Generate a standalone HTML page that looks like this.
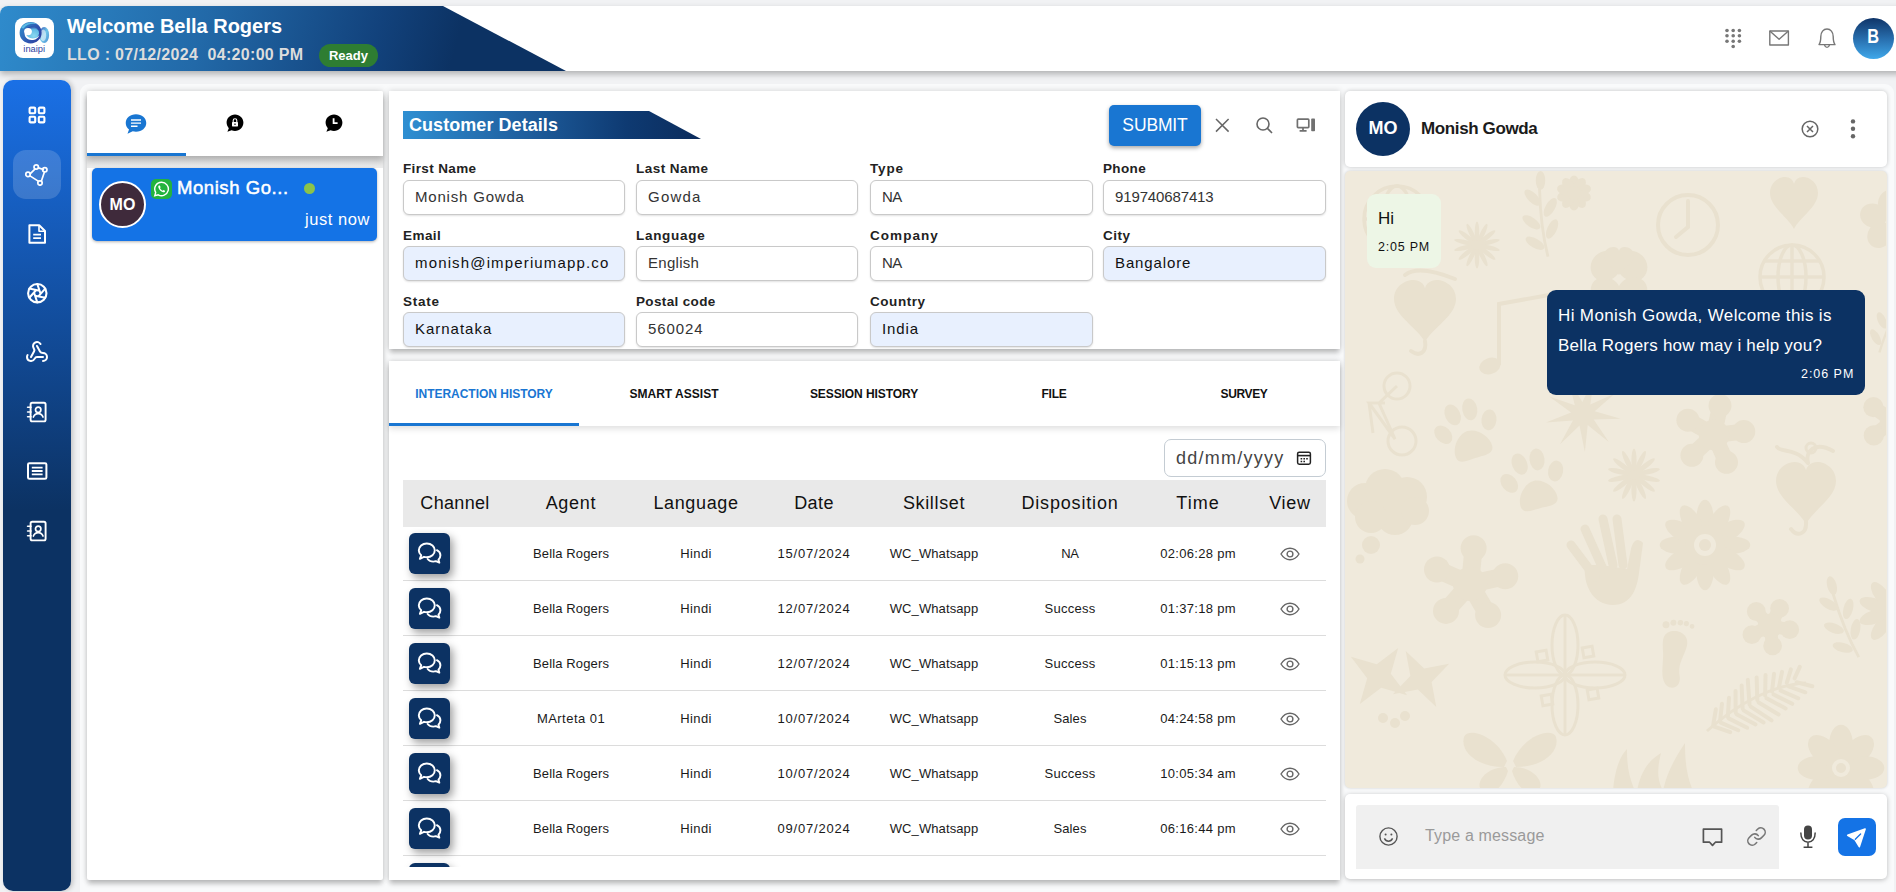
<!DOCTYPE html>
<html><head><meta charset="utf-8">
<style>
*{box-sizing:border-box;margin:0;padding:0}
html,body{width:1896px;height:892px;overflow:hidden;background:#f1f2f4;font-family:"Liberation Sans",sans-serif;color:#222}
.abs{position:absolute}
#hdr{position:absolute;left:0;top:6px;width:1930px;height:65px;background:#fff;box-shadow:0 3px 6px rgba(0,0,0,.28);border-radius:8px 0 0 0}
#hdrblue{position:absolute;left:0;top:0;width:566px;height:65px;background:linear-gradient(105deg,#2f8bcc 0%,#2269a8 36%,#12427c 66%,#0c3263 80%,#0c3263 100%);clip-path:polygon(0 0,443px 0,566px 65px,0 65px);border-radius:8px 0 0 0}
#logo{position:absolute;left:15px;top:12px;width:38.5px;height:40px;background:#fff;border-radius:8px}
.t1{position:absolute;left:67px;top:8px;font-weight:700;font-size:20px;color:#fff;white-space:nowrap;line-height:24px}
.t2{position:absolute;left:67px;top:39px;font-weight:700;font-size:16px;color:#ddd;white-space:pre;line-height:20px}
.ready{position:absolute;left:319px;top:38px;width:59px;height:23px;border-radius:12px;background:#2e7d32;color:#fff;font-weight:700;font-size:13px;text-align:center;line-height:23px}
#side{position:absolute;left:3px;top:80px;width:68px;height:811px;border-radius:10px;background:linear-gradient(180deg,#1a70e6 0%,#0c3263 53%,#0c3263 100%);box-shadow:2px 0 5px rgba(0,0,0,.2)}
.panel{position:absolute;background:#fff;box-shadow:0 5px 5px -1px rgba(0,0,0,.2),0 0 6px rgba(0,0,0,.17)}

.tabbar{position:absolute;left:0;top:0;width:296px;height:65px;background:#fff;box-shadow:0 4px 6px rgba(0,0,0,.2);border-radius:2px 2px 0 0}
.citem{position:absolute;left:5px;top:77px;width:285px;height:73px;border-radius:5px;background:#1473e6;box-shadow:0 1px 3px rgba(0,0,0,.3)}
.lbl{position:absolute;font-weight:700;font-size:13.5px;color:#222;line-height:16px;white-space:nowrap}
.inp{position:absolute;width:222px;height:35px;border:1px solid #c9c9c9;border-radius:6px;background:#fff;font-size:15px;color:#333;line-height:31px;padding-left:11px;white-space:nowrap;overflow:hidden;box-shadow:0 1px 2px rgba(0,0,0,.12)}
.inp.af{background:#e8f0fe;color:#111}

.tab{position:absolute;top:0;width:190px;height:64px;text-align:center;font-weight:700;font-size:12px;line-height:66px;color:#111;white-space:nowrap}
.th{position:absolute;top:0;height:47px;line-height:47px;font-size:18px;color:#111;text-align:center;white-space:nowrap;transform:translateX(-50%)}
.row{position:absolute;left:14px;width:923px;height:55px;border-bottom:1px solid #dcdcdc}
.td{position:absolute;top:0;height:56px;line-height:56px;font-size:13px;color:#1a1a1a;white-space:nowrap;transform:translateX(-50%)}
.chi{position:absolute;left:6px;top:7px;width:41px;height:41px;border-radius:6px;background:#0c3263;box-shadow:3px 4px 8px rgba(0,0,0,.38)}
</style></head><body>
<div id="hdr"><div id="hdrblue"></div>
<div id="logo"></div>
<div class="t1" style="--w:215;letter-spacing:-0.01px">Welcome Bella Rogers</div>
<div class="t2" style="--w:236;letter-spacing:0.30px">LLO : 07/12/2024  04:20:00 PM</div>
<div class="ready">Ready</div>
<svg class="abs" style="left:15px;top:12px" width="39" height="40" viewBox="0 0 39 40">
<defs><linearGradient id="lg1" x1="0" y1=".3" x2="1" y2=".9"><stop offset="0" stop-color="#2f86c9"/><stop offset=".55" stop-color="#2f55b0"/><stop offset="1" stop-color="#2a3c9c"/></linearGradient>
<linearGradient id="lg2" x1="0" y1="0" x2="1" y2="1"><stop offset="0" stop-color="#3a55b4"/><stop offset=".5" stop-color="#6cc6ea"/><stop offset="1" stop-color="#4d8fd2"/></linearGradient>
<radialGradient id="lg3" cx=".65" cy=".7" r=".7"><stop offset="0" stop-color="#8ad8f0"/><stop offset=".7" stop-color="#5fb9e4"/><stop offset="1" stop-color="#2d4aa6"/></radialGradient></defs>
<ellipse cx="29.2" cy="17" rx="4.9" ry="8" fill="url(#lg2)"/>
<ellipse cx="28.2" cy="17.4" rx="3" ry="5.8" fill="#fff" opacity=".55"/>
<ellipse cx="15.6" cy="14.7" rx="11" ry="10.8" fill="url(#lg1)"/>
<path d="M6.2 10 C9 4.6 17 2.6 22.4 6.2 C18 5 12 5.6 8.6 10.4 Z" fill="#62c4ea" opacity=".85"/>
<ellipse cx="16.6" cy="15.2" rx="7.4" ry="6.6" fill="url(#lg3)"/>
<path d="M9.6 15.6 C9.6 20 13.6 22.6 18 22 C21.4 21.5 23.6 19.6 24.4 17.2 C22.6 19.6 20.4 20.4 17.6 20.4 C14 20.4 11.4 18.4 10.6 15 Z" fill="#fff"/>
<ellipse cx="13" cy="13.6" rx="3.9" ry="3.7" fill="#fff"/>
<text x="19.2" y="34.3" font-family="Liberation Sans" font-size="9.3" fill="#2c3fa0" text-anchor="middle">inaipi</text>
</svg>
<svg class="abs" style="left:1722px;top:20px" width="24" height="24" viewBox="0 0 24 24" fill="#777">
<circle cx="5" cy="4.5" r="1.8"/><circle cx="11.2" cy="4.5" r="1.8"/><circle cx="17.4" cy="4.5" r="1.8"/>
<circle cx="5" cy="9.8" r="1.8"/><circle cx="11.2" cy="9.8" r="1.8"/><circle cx="17.4" cy="9.8" r="1.8"/>
<circle cx="5" cy="15.2" r="1.8"/><circle cx="11.2" cy="15.2" r="1.8"/><circle cx="17.4" cy="15.2" r="1.8"/>
<circle cx="11.2" cy="20.5" r="1.8"/></svg>
<svg class="abs" style="left:1767px;top:22px" width="24" height="20" viewBox="0 0 24 20" fill="none" stroke="#777" stroke-width="1.4" stroke-linejoin="round">
<rect x="2.8" y="3" width="18.6" height="14"/><path d="M2.8 3 L12.1 11.3 L21.4 3"/></svg>
<svg class="abs" style="left:1815px;top:20px" width="24" height="26" viewBox="0 0 24 26" fill="none" stroke="#777" stroke-width="1.4" stroke-linejoin="round" stroke-linecap="round">
<path d="M4 18.6 C5.6 16.6 5.8 14.6 5.8 10.6 C5.8 6.2 8.4 3 12 3 C15.6 3 18.2 6.2 18.2 10.6 C18.2 14.6 18.4 16.6 20 18.6 Z"/><path d="M9.6 19.2 C10 20.8 11 21.4 12 21.4 C13 21.4 14 20.8 14.4 19.2"/></svg>
<div class="abs" style="left:1853px;top:12px;width:41px;height:41px;border-radius:50%;background:linear-gradient(180deg,#0f3468 0%,#2a73b3 55%,#40a8ea 100%);color:#fff;font-weight:700;font-size:19.5px;text-align:center;line-height:37px"><span style="display:inline-block;transform:scaleX(.84)">B</span></div>

</div>
<div class="abs" style="left:80px;top:84px;width:1814px;height:830px;border-radius:9px;background:#f9fafb"></div>
<div id="side">
<div class="abs" style="left:10px;top:70px;width:48px;height:49px;border-radius:13px;background:rgba(255,255,255,.16)"></div>
<!-- grid -->
<svg class="abs" style="left:22px;top:23px" width="24" height="24" viewBox="0 0 24 24" fill="none" stroke="#fff" stroke-width="2.1" stroke-linejoin="round">
<rect x="4.6" y="4.6" width="5.6" height="5.6" rx="1"/><rect x="13.8" y="4.6" width="5.6" height="5.6" rx="1"/><rect x="4.6" y="13.8" width="5.6" height="5.6" rx="1"/><rect x="13.8" y="13.8" width="5.6" height="5.6" rx="1"/></svg>
<!-- polygon -->
<svg class="abs" style="left:21.3px;top:82.3px" width="24" height="24" viewBox="0 0 24 24" fill="none" stroke="#fff" stroke-width="1.7">
<path d="M5.6 12.4 L11.4 6.6 M13.8 5.6 L20 7.8 M20.6 9.6 L17.4 19 M15 19.6 L5.6 13.6"/>
<circle cx="12.2" cy="5" r="2.2"/><circle cx="20.8" cy="7.8" r="2.2"/><circle cx="4" cy="12.4" r="2.2"/><circle cx="16" cy="21" r="2.2"/></svg>
<!-- doc -->
<svg class="abs" style="left:22px;top:142px" width="24" height="24" viewBox="0 0 24 24" fill="none" stroke="#fff" stroke-width="2" stroke-linejoin="round">
<path d="M4.4 3.2 H14.2 L20 9 V20.8 H4.4 Z"/><path d="M14 3.4 V9.2 H19.8" stroke-width="1.6"/><path d="M8.2 12.6 H16 M8.2 16.2 H16" stroke-width="1.8"/></svg>
<!-- aperture -->
<svg class="abs" style="left:22px;top:201px" width="24" height="24" viewBox="0 0 24 24" fill="none" stroke="#fff" stroke-width="2.1" stroke-linecap="round">
<circle cx="12.3" cy="12.15" r="9.2"/>
<path d="M20.27 16.75 L10.08 14.65 M12.30 21.35 L9.02 11.48 M4.33 16.75 L11.24 8.97 M4.33 7.55 L14.52 9.65 M12.30 2.95 L15.58 12.82 M20.27 7.55 L13.36 15.33" stroke-width="2"/></svg>
<!-- webhook -->
<svg class="abs" style="left:22px;top:260px" width="24" height="24" viewBox="0 0 24 24" fill="none" stroke="#fff" stroke-width="2" stroke-linecap="round" stroke-linejoin="round">
<path d="M18 16.98h-5.99c-1.1 0-1.95.94-2.48 1.9A4 4 0 0 1 2 17c.01-.7.2-1.4.57-2"/><path d="m6 17 3.13-5.78c.53-.97.1-2.18-.5-3.1a4 4 0 1 1 6.89-4.06"/><path d="m12 6 3.13 5.73C15.66 12.7 16.9 13 18 13a4 4 0 0 1 0 8"/></svg>
<!-- contact book -->
<svg class="abs" style="left:22px;top:320px" width="24" height="24" viewBox="0 0 24 24" fill="none" stroke="#fff" stroke-width="1.9" stroke-linejoin="round" stroke-linecap="round">
<rect x="5.6" y="2.8" width="15" height="18.6" rx="1.6"/><path d="M2.6 7.2 H6 M2.6 12 H6 M2.6 16.8 H6" stroke-width="1.6"/><circle cx="13.2" cy="9.8" r="2.7" stroke-width="1.7"/><path d="M8.4 17 C9.4 14.4 11.4 13.6 13.2 13.6 C15 13.6 17 14.4 18 17" stroke-width="1.7"/></svg>
<!-- list -->
<svg class="abs" style="left:22px;top:379px" width="24" height="24" viewBox="0 0 24 24" fill="none" stroke="#fff" stroke-width="2" stroke-linejoin="round">
<rect x="3" y="4.2" width="18.4" height="15.6" rx="1.4"/><path d="M6.8 8.6 H17.6 M6.8 12 H17.6 M6.8 15.4 H17.6" stroke-width="1.8"/></svg>
<!-- contact book 2 -->
<svg class="abs" style="left:22px;top:439px" width="24" height="24" viewBox="0 0 24 24" fill="none" stroke="#fff" stroke-width="1.9" stroke-linejoin="round" stroke-linecap="round">
<rect x="5.6" y="2.8" width="15" height="18.6" rx="1.6"/><path d="M2.6 7.2 H6 M2.6 12 H6 M2.6 16.8 H6" stroke-width="1.6"/><circle cx="13.2" cy="9.8" r="2.7" stroke-width="1.7"/><path d="M8.4 17 C9.4 14.4 11.4 13.6 13.2 13.6 C15 13.6 17 14.4 18 17" stroke-width="1.7"/></svg>
</div>
<div class="panel" id="left" style="left:87px;top:91px;width:296px;height:789px;border-radius:2px">
<div class="abs" style="left:0;top:65px;width:296px;height:12px;background:linear-gradient(180deg,#dadada,#ececec)"></div><div class="tabbar"></div>
<div class="abs" style="left:0;top:62px;width:99px;height:3px;background:#1976d2"></div>
<!-- tab icons -->
<svg class="abs" style="left:37px;top:20.5px" width="24" height="24" viewBox="0 0 22 22"><path d="M11 2 C5.6 2 1.6 5.6 1.6 10 C1.6 12.4 2.8 14.6 4.6 16 L3.2 20 L8 17.6 C9 17.9 10 18 11 18 C16.4 18 20.4 14.4 20.4 10 C20.4 5.6 16.4 2 11 2 Z" fill="#1976d2"/><path d="M6.4 7.4 H15.6 M6.4 10.2 H15.6 M6.4 13 H12.4" stroke="#fff" stroke-width="1.3"/></svg>
<svg class="abs" style="left:138px;top:22px" width="20" height="20" viewBox="0 0 20 20"><path d="M10 1.4 C5.2 1.4 1.6 5 1.6 9.6 C1.6 11.8 2.4 13.6 3.8 15.2 L2.4 18.8 L6.6 17.2 C7.6 17.7 8.8 17.9 10 17.9 C14.8 17.9 18.4 14.2 18.4 9.6 C18.4 5 14.8 1.4 10 1.4 Z" fill="#000"/><rect x="7" y="9" width="6" height="4.4" rx=".6" fill="#fff"/><path d="M8.2 9 V7.6 C8.2 6.4 9 5.8 10 5.8 C11 5.8 11.8 6.4 11.8 7.6 V9" fill="none" stroke="#fff" stroke-width="1.1"/><rect x="9.3" y="10.6" width="1.4" height="1.2" fill="#000"/></svg>
<svg class="abs" style="left:237px;top:22px" width="20" height="20" viewBox="0 0 20 20"><path d="M10 1.4 C5.2 1.4 1.6 5 1.6 9.6 C1.6 11.8 2.4 13.6 3.8 15.2 L2.4 18.8 L6.6 17.2 C7.6 17.7 8.8 17.9 10 17.9 C14.8 17.9 18.4 14.2 18.4 9.6 C18.4 5 14.8 1.4 10 1.4 Z" fill="#000"/><path d="M9.6 5.2 V10.2 H13.6" fill="none" stroke="#fff" stroke-width="1.8"/></svg>
<div class="citem">
<div class="abs" style="left:7px;top:13px;width:47px;height:47px;border-radius:50%;background:#3f2a3b;border:2px solid #fff;color:#fff;font-weight:700;font-size:16px;text-align:center;line-height:44px">MO</div>
<div class="abs" style="left:59px;top:11px;width:21px;height:20px;border-radius:5px;background:#23b33e"></div>
<svg class="abs" style="left:61px;top:12px" width="17" height="18" viewBox="0 0 24 24"><path d="M12 2.5 A9.5 9.5 0 0 0 3.8 16.8 L2.5 21.5 L7.4 20.2 A9.5 9.5 0 1 0 12 2.5 Z" fill="none" stroke="#fff" stroke-width="2"/><path d="M8.4 7.2 C7.6 7.6 7.2 8.6 7.6 10 C8.4 13 11 15.8 14.2 16.6 C15.4 16.9 16.6 16.4 16.9 15.4 L17 14.6 L14.6 13.4 L13.6 14.4 C12 13.8 10.4 12.2 9.8 10.6 L10.8 9.6 L9.6 7.1 Z" fill="#fff"/></svg>
<div class="abs" style="--w:111;letter-spacing:0.56px;left:85px;top:8px;font-size:18.5px;line-height:24px;color:#fff;white-space:nowrap;-webkit-text-stroke:.5px #fff">Monish Go...</div>
<div class="abs" style="left:212px;top:15px;width:11px;height:11px;border-radius:50%;background:#8bc34a"></div>
<div class="abs" style="--w:64.5;letter-spacing:0.57px;right:7px;top:40px;font-size:16.5px;line-height:22px;color:#fff;white-space:nowrap">just now</div>
</div>
</div>
<div class="panel" id="ctop" style="left:389px;top:91px;width:951px;height:258px">
<div class="abs" style="left:14px;top:20px;width:298px;height:28px;background:linear-gradient(90deg,#2f8fd2 0%,#1f5f9f 40%,#0e3a72 75%,#0b2c5c 100%);clip-path:polygon(0 0,246px 0,298px 28px,0 28px)"></div>
<div class="abs" style="--w:149;letter-spacing:0.06px;left:20px;top:22px;font-weight:700;font-size:18px;line-height:24px;color:#fff;white-space:nowrap">Customer Details</div>
<div class="abs" style="--w:65.4;letter-spacing:-0.14px;left:720px;top:14px;width:92px;height:41px;border-radius:5px;background:#1976d2;box-shadow:0 2px 4px rgba(0,0,0,.35);color:#fff;font-size:17.5px;text-align:center;line-height:40px">SUBMIT</div>
<svg class="abs" style="left:823px;top:24px" width="20" height="20" viewBox="0 0 20 20" stroke="#666" stroke-width="1.5" fill="none"><path d="M4 4 L16.6 16.6 M16.6 4 L4 16.6"/></svg>
<svg class="abs" style="left:865px;top:24px" width="20" height="20" viewBox="0 0 20 20" stroke="#666" stroke-width="1.6" fill="none"><circle cx="9" cy="9" r="6"/><path d="M13.4 13.4 L18 18"/></svg>
<svg class="abs" style="left:906px;top:24px" width="22" height="20" viewBox="0 0 22 20" fill="none" stroke="#707070" stroke-width="1.7"><rect x="2.4" y="4.2" width="11.4" height="8.4" rx=".8"/><path d="M8 12.8 V15.6 M4.6 15.8 H11.6"/><rect x="16.2" y="3.6" width="3.8" height="12.6" rx=".8" fill="#707070" stroke="none"/></svg>
<div class="lbl" style="--w:73;letter-spacing:0.36px;left:14px;top:70px">First Name</div><div class="inp" style="left:14px;top:89px"><span style="--w:109;letter-spacing:0.81px">Monish Gowda</span></div><div class="lbl" style="--w:72;letter-spacing:0.46px;left:247px;top:70px">Last Name</div><div class="inp" style="left:247px;top:89px"><span style="--w:52.4;letter-spacing:1.22px">Gowda</span></div><div class="lbl" style="--w:33;letter-spacing:0.83px;left:481px;top:70px">Type</div><div class="inp" style="left:481px;width:223px;top:89px"><span style="--w:19.7;letter-spacing:-0.70px">NA</span></div><div class="lbl" style="--w:42.7;letter-spacing:0.36px;left:714px;top:70px">Phone</div><div class="inp" style="left:714px;width:223px;top:89px"><span style="--w:98.7;letter-spacing:-0.13px">919740687413</span></div><div class="lbl" style="--w:37.8;letter-spacing:0.44px;left:14px;top:137px">Email</div><div class="inp af" style="left:14px;top:155px"><span style="--w:193.2;letter-spacing:1.15px">monish@imperiumapp.co</span></div><div class="lbl" style="--w:68.7;letter-spacing:0.70px;left:247px;top:137px">Language</div><div class="inp" style="left:247px;top:155px"><span style="--w:50.9;letter-spacing:0.28px">English</span></div><div class="lbl" style="--w:67.8;letter-spacing:1.05px;left:481px;top:137px">Company</div><div class="inp" style="left:481px;width:223px;top:155px"><span style="--w:19.7;letter-spacing:-0.70px">NA</span></div><div class="lbl" style="--w:27;letter-spacing:0.49px;left:714px;top:137px">City</div><div class="inp af" style="left:714px;width:223px;top:155px"><span style="--w:75.4;letter-spacing:0.88px">Bangalore</span></div><div class="lbl" style="--w:36;letter-spacing:0.75px;left:14px;top:203px">State</div><div class="inp af" style="left:14px;top:221px"><span style="--w:76.2;letter-spacing:0.98px">Karnataka</span></div><div class="lbl" style="--w:79.3;letter-spacing:0.35px;left:247px;top:203px">Postal code</div><div class="inp" style="left:247px;top:221px"><span style="--w:54.5;letter-spacing:0.89px">560024</span></div><div class="lbl" style="--w:55.1;letter-spacing:0.56px;left:481px;top:203px">Country</div><div class="inp af" style="left:481px;width:223px;top:221px"><span style="--w:36;letter-spacing:0.87px">India</span></div>
</div>
<div class="panel" id="cbot" style="left:389px;top:361px;width:951px;height:519px">
<div class="abs" style="left:0;top:0;width:951px;height:65px;background:#fff;box-shadow:0 3px 6px rgba(0,0,0,.12)"></div>
<div class="tab" style="--w:137.7;letter-spacing:-0.02px;left:0px;color:#1976d2">INTERACTION HISTORY</div><div class="tab" style="--w:89;letter-spacing:0.01px;left:190px">SMART ASSIST</div><div class="tab" style="--w:108.2;letter-spacing:-0.08px;left:380px">SESSION HISTORY</div><div class="tab" style="--w:25.1;letter-spacing:-0.30px;left:570px">FILE</div><div class="tab" style="--w:47.2;letter-spacing:-0.39px;left:760px">SURVEY</div>
<div class="abs" style="left:0;top:62px;width:190px;height:3px;background:#1976d2"></div>
<div class="abs" style="left:775px;top:78px;width:162px;height:38px;border:1px solid #c4ccd3;border-radius:7px;background:#fff"></div>
<div class="abs" style="--w:107.2;letter-spacing:1.24px;left:787px;top:85px;font-size:18px;line-height:24px;color:#444;white-space:nowrap;">dd/mm/yyyy</div>
<svg class="abs" style="left:907px;top:89px" width="16" height="16" viewBox="0 0 16 16" fill="none" stroke="#222" stroke-width="1.5"><rect x="1.6" y="2.2" width="12.8" height="12" rx="1.6"/><path d="M1.6 5.6 H14.4" stroke-width="1.6"/><path d="M4.6 8.8 H6.2 M7.4 8.8 H9 M10.2 8.8 H11.8 M4.6 11.4 H6.2 M7.4 11.4 H9" stroke-width="1.5"/></svg>
<div class="abs" style="left:0;top:0;width:951px;height:506px;overflow:hidden">
<div class="abs" style="left:14px;top:119px;width:923px;height:47px;background:#e9e9e9"><div class="th" style="--w:69;letter-spacing:0.32px;left:52px">Channel</div><div class="th" style="--w:50;letter-spacing:0.74px;left:168px">Agent</div><div class="th" style="--w:84.4;letter-spacing:0.62px;left:293px">Language</div><div class="th" style="--w:39.3;letter-spacing:0.42px;left:411px">Date</div><div class="th" style="--w:61.5;letter-spacing:0.64px;left:531px">Skillset</div><div class="th" style="--w:96.3;letter-spacing:0.83px;left:667px">Disposition</div><div class="th" style="--w:42.4;letter-spacing:1.02px;left:795px">Time</div><div class="th" style="--w:40.9;letter-spacing:0.73px;left:887px">View</div></div>
<div class="row" style="top:165px"><div class="chi"><svg class="abs" style="left:7px;top:7px" width="27" height="27" viewBox="0 0 25 25" fill="none" stroke="#fff" stroke-width="1.8" stroke-linejoin="round" stroke-linecap="round"><path d="M10 3.2 C5.8 3.2 2.6 6 2.6 9.6 C2.6 11.4 3.4 13 4.8 14.2 L3.6 17.4 L7.4 15.6 C8.2 15.9 9.1 16 10 16 C14.2 16 17.4 13.2 17.4 9.6 C17.4 6 14.2 3.2 10 3.2 Z"/><path d="M19.4 9.4 C21.4 10.4 22.6 12.2 22.6 14.2 C22.6 15.8 21.9 17.2 20.8 18.2 L21.6 21 L18.4 19.6 C17.6 19.9 16.8 20 16 20 C13.8 20 11.9 19.1 10.8 17.6"/></svg></div><div class="td" style="--w:76;letter-spacing:0.14px;left:168px">Bella Rogers</div><div class="td" style="--w:31.2;letter-spacing:0.39px;left:293px">Hindi</div><div class="td" style="--w:72;letter-spacing:0.77px;left:411px">15/07/2024</div><div class="td" style="--w:88.4;letter-spacing:0.10px;left:531px">WC_Whatsapp</div><div class="td" style="--w:17.9;letter-spacing:-0.16px;left:667px">NA</div><div class="td" style="--w:75.4;letter-spacing:0.31px;left:795px">02:06:28 pm</div><svg class="abs" style="left:877px;top:21px" width="20" height="14" viewBox="0 0 20 14" fill="none" stroke="#666" stroke-width="1.4"><path d="M1 7 C3.4 3 6.4 1.2 10 1.2 C13.6 1.2 16.6 3 19 7 C16.6 11 13.6 12.8 10 12.8 C6.4 12.8 3.4 11 1 7 Z"/><circle cx="10" cy="7" r="2.9"/></svg></div><div class="row" style="top:220px"><div class="chi"><svg class="abs" style="left:7px;top:7px" width="27" height="27" viewBox="0 0 25 25" fill="none" stroke="#fff" stroke-width="1.8" stroke-linejoin="round" stroke-linecap="round"><path d="M10 3.2 C5.8 3.2 2.6 6 2.6 9.6 C2.6 11.4 3.4 13 4.8 14.2 L3.6 17.4 L7.4 15.6 C8.2 15.9 9.1 16 10 16 C14.2 16 17.4 13.2 17.4 9.6 C17.4 6 14.2 3.2 10 3.2 Z"/><path d="M19.4 9.4 C21.4 10.4 22.6 12.2 22.6 14.2 C22.6 15.8 21.9 17.2 20.8 18.2 L21.6 21 L18.4 19.6 C17.6 19.9 16.8 20 16 20 C13.8 20 11.9 19.1 10.8 17.6"/></svg></div><div class="td" style="--w:76;letter-spacing:0.14px;left:168px">Bella Rogers</div><div class="td" style="--w:31.2;letter-spacing:0.39px;left:293px">Hindi</div><div class="td" style="--w:72;letter-spacing:0.77px;left:411px">12/07/2024</div><div class="td" style="--w:88.4;letter-spacing:0.10px;left:531px">WC_Whatsapp</div><div class="td" style="--w:50.8;letter-spacing:0.28px;left:667px">Success</div><div class="td" style="--w:75.4;letter-spacing:0.31px;left:795px">01:37:18 pm</div><svg class="abs" style="left:877px;top:21px" width="20" height="14" viewBox="0 0 20 14" fill="none" stroke="#666" stroke-width="1.4"><path d="M1 7 C3.4 3 6.4 1.2 10 1.2 C13.6 1.2 16.6 3 19 7 C16.6 11 13.6 12.8 10 12.8 C6.4 12.8 3.4 11 1 7 Z"/><circle cx="10" cy="7" r="2.9"/></svg></div><div class="row" style="top:275px"><div class="chi"><svg class="abs" style="left:7px;top:7px" width="27" height="27" viewBox="0 0 25 25" fill="none" stroke="#fff" stroke-width="1.8" stroke-linejoin="round" stroke-linecap="round"><path d="M10 3.2 C5.8 3.2 2.6 6 2.6 9.6 C2.6 11.4 3.4 13 4.8 14.2 L3.6 17.4 L7.4 15.6 C8.2 15.9 9.1 16 10 16 C14.2 16 17.4 13.2 17.4 9.6 C17.4 6 14.2 3.2 10 3.2 Z"/><path d="M19.4 9.4 C21.4 10.4 22.6 12.2 22.6 14.2 C22.6 15.8 21.9 17.2 20.8 18.2 L21.6 21 L18.4 19.6 C17.6 19.9 16.8 20 16 20 C13.8 20 11.9 19.1 10.8 17.6"/></svg></div><div class="td" style="--w:76;letter-spacing:0.14px;left:168px">Bella Rogers</div><div class="td" style="--w:31.2;letter-spacing:0.39px;left:293px">Hindi</div><div class="td" style="--w:72;letter-spacing:0.77px;left:411px">12/07/2024</div><div class="td" style="--w:88.4;letter-spacing:0.10px;left:531px">WC_Whatsapp</div><div class="td" style="--w:50.8;letter-spacing:0.28px;left:667px">Success</div><div class="td" style="--w:75.4;letter-spacing:0.31px;left:795px">01:15:13 pm</div><svg class="abs" style="left:877px;top:21px" width="20" height="14" viewBox="0 0 20 14" fill="none" stroke="#666" stroke-width="1.4"><path d="M1 7 C3.4 3 6.4 1.2 10 1.2 C13.6 1.2 16.6 3 19 7 C16.6 11 13.6 12.8 10 12.8 C6.4 12.8 3.4 11 1 7 Z"/><circle cx="10" cy="7" r="2.9"/></svg></div><div class="row" style="top:330px"><div class="chi"><svg class="abs" style="left:7px;top:7px" width="27" height="27" viewBox="0 0 25 25" fill="none" stroke="#fff" stroke-width="1.8" stroke-linejoin="round" stroke-linecap="round"><path d="M10 3.2 C5.8 3.2 2.6 6 2.6 9.6 C2.6 11.4 3.4 13 4.8 14.2 L3.6 17.4 L7.4 15.6 C8.2 15.9 9.1 16 10 16 C14.2 16 17.4 13.2 17.4 9.6 C17.4 6 14.2 3.2 10 3.2 Z"/><path d="M19.4 9.4 C21.4 10.4 22.6 12.2 22.6 14.2 C22.6 15.8 21.9 17.2 20.8 18.2 L21.6 21 L18.4 19.6 C17.6 19.9 16.8 20 16 20 C13.8 20 11.9 19.1 10.8 17.6"/></svg></div><div class="td" style="--w:67.7;letter-spacing:0.46px;left:168px">MArteta 01</div><div class="td" style="--w:31.2;letter-spacing:0.39px;left:293px">Hindi</div><div class="td" style="--w:72;letter-spacing:0.77px;left:411px">10/07/2024</div><div class="td" style="--w:88.4;letter-spacing:0.10px;left:531px">WC_Whatsapp</div><div class="td" style="--w:32.9;letter-spacing:0.09px;left:667px">Sales</div><div class="td" style="--w:75.4;letter-spacing:0.31px;left:795px">04:24:58 pm</div><svg class="abs" style="left:877px;top:21px" width="20" height="14" viewBox="0 0 20 14" fill="none" stroke="#666" stroke-width="1.4"><path d="M1 7 C3.4 3 6.4 1.2 10 1.2 C13.6 1.2 16.6 3 19 7 C16.6 11 13.6 12.8 10 12.8 C6.4 12.8 3.4 11 1 7 Z"/><circle cx="10" cy="7" r="2.9"/></svg></div><div class="row" style="top:385px"><div class="chi"><svg class="abs" style="left:7px;top:7px" width="27" height="27" viewBox="0 0 25 25" fill="none" stroke="#fff" stroke-width="1.8" stroke-linejoin="round" stroke-linecap="round"><path d="M10 3.2 C5.8 3.2 2.6 6 2.6 9.6 C2.6 11.4 3.4 13 4.8 14.2 L3.6 17.4 L7.4 15.6 C8.2 15.9 9.1 16 10 16 C14.2 16 17.4 13.2 17.4 9.6 C17.4 6 14.2 3.2 10 3.2 Z"/><path d="M19.4 9.4 C21.4 10.4 22.6 12.2 22.6 14.2 C22.6 15.8 21.9 17.2 20.8 18.2 L21.6 21 L18.4 19.6 C17.6 19.9 16.8 20 16 20 C13.8 20 11.9 19.1 10.8 17.6"/></svg></div><div class="td" style="--w:76;letter-spacing:0.14px;left:168px">Bella Rogers</div><div class="td" style="--w:31.2;letter-spacing:0.39px;left:293px">Hindi</div><div class="td" style="--w:72;letter-spacing:0.77px;left:411px">10/07/2024</div><div class="td" style="--w:88.4;letter-spacing:0.10px;left:531px">WC_Whatsapp</div><div class="td" style="--w:50.8;letter-spacing:0.28px;left:667px">Success</div><div class="td" style="--w:75.4;letter-spacing:0.31px;left:795px">10:05:34 am</div><svg class="abs" style="left:877px;top:21px" width="20" height="14" viewBox="0 0 20 14" fill="none" stroke="#666" stroke-width="1.4"><path d="M1 7 C3.4 3 6.4 1.2 10 1.2 C13.6 1.2 16.6 3 19 7 C16.6 11 13.6 12.8 10 12.8 C6.4 12.8 3.4 11 1 7 Z"/><circle cx="10" cy="7" r="2.9"/></svg></div><div class="row" style="top:440px"><div class="chi"><svg class="abs" style="left:7px;top:7px" width="27" height="27" viewBox="0 0 25 25" fill="none" stroke="#fff" stroke-width="1.8" stroke-linejoin="round" stroke-linecap="round"><path d="M10 3.2 C5.8 3.2 2.6 6 2.6 9.6 C2.6 11.4 3.4 13 4.8 14.2 L3.6 17.4 L7.4 15.6 C8.2 15.9 9.1 16 10 16 C14.2 16 17.4 13.2 17.4 9.6 C17.4 6 14.2 3.2 10 3.2 Z"/><path d="M19.4 9.4 C21.4 10.4 22.6 12.2 22.6 14.2 C22.6 15.8 21.9 17.2 20.8 18.2 L21.6 21 L18.4 19.6 C17.6 19.9 16.8 20 16 20 C13.8 20 11.9 19.1 10.8 17.6"/></svg></div><div class="td" style="--w:76;letter-spacing:0.14px;left:168px">Bella Rogers</div><div class="td" style="--w:31.2;letter-spacing:0.39px;left:293px">Hindi</div><div class="td" style="--w:72;letter-spacing:0.77px;left:411px">09/07/2024</div><div class="td" style="--w:88.4;letter-spacing:0.10px;left:531px">WC_Whatsapp</div><div class="td" style="--w:32.9;letter-spacing:0.09px;left:667px">Sales</div><div class="td" style="--w:75.4;letter-spacing:0.31px;left:795px">06:16:44 pm</div><svg class="abs" style="left:877px;top:21px" width="20" height="14" viewBox="0 0 20 14" fill="none" stroke="#666" stroke-width="1.4"><path d="M1 7 C3.4 3 6.4 1.2 10 1.2 C13.6 1.2 16.6 3 19 7 C16.6 11 13.6 12.8 10 12.8 C6.4 12.8 3.4 11 1 7 Z"/><circle cx="10" cy="7" r="2.9"/></svg></div><div class="row" style="top:495px"><div class="chi"><svg class="abs" style="left:7px;top:7px" width="27" height="27" viewBox="0 0 25 25" fill="none" stroke="#fff" stroke-width="1.8" stroke-linejoin="round" stroke-linecap="round"><path d="M10 3.2 C5.8 3.2 2.6 6 2.6 9.6 C2.6 11.4 3.4 13 4.8 14.2 L3.6 17.4 L7.4 15.6 C8.2 15.9 9.1 16 10 16 C14.2 16 17.4 13.2 17.4 9.6 C17.4 6 14.2 3.2 10 3.2 Z"/><path d="M19.4 9.4 C21.4 10.4 22.6 12.2 22.6 14.2 C22.6 15.8 21.9 17.2 20.8 18.2 L21.6 21 L18.4 19.6 C17.6 19.9 16.8 20 16 20 C13.8 20 11.9 19.1 10.8 17.6"/></svg></div><div class="td" style="--w:76;letter-spacing:0.14px;left:168px">Bella Rogers</div><div class="td" style="--w:31.2;letter-spacing:0.39px;left:293px">Hindi</div><div class="td" style="--w:72;letter-spacing:0.77px;left:411px">09/07/2024</div><div class="td" style="--w:88.4;letter-spacing:0.10px;left:531px">WC_Whatsapp</div><div class="td" style="--w:32.9;letter-spacing:0.09px;left:667px">Sales</div><div class="td" style="--w:75.4;letter-spacing:0.31px;left:795px">05:10:02 pm</div><svg class="abs" style="left:877px;top:21px" width="20" height="14" viewBox="0 0 20 14" fill="none" stroke="#666" stroke-width="1.4"><path d="M1 7 C3.4 3 6.4 1.2 10 1.2 C13.6 1.2 16.6 3 19 7 C16.6 11 13.6 12.8 10 12.8 C6.4 12.8 3.4 11 1 7 Z"/><circle cx="10" cy="7" r="2.9"/></svg></div>
</div>
</div>
<div class="panel" id="rhead" style="left:1345px;top:91px;width:542px;height:76px;border-radius:5px;box-shadow:0 0 4px rgba(0,0,0,.22)">
<div class="abs" style="left:11px;top:11px;width:54px;height:54px;border-radius:50%;background:#0c3263;color:#fff;font-weight:700;font-size:18px;text-align:center;line-height:53px">MO</div>
<div class="abs" style="--w:116.8;letter-spacing:-0.37px;left:76px;top:26px;font-weight:700;font-size:17px;line-height:24px;color:#1b1b1b;white-space:nowrap">Monish Gowda</div>
<svg class="abs" style="left:455px;top:28px" width="20" height="20" viewBox="0 0 20 20" fill="none" stroke="#666" stroke-width="1.5"><circle cx="10" cy="10" r="7.8"/><path d="M7 7 L13 13 M13 7 L7 13"/></svg>
<svg class="abs" style="left:503px;top:25px" width="10" height="26" viewBox="0 0 10 26" fill="#666"><circle cx="5" cy="5.4" r="2.2"/><circle cx="5" cy="12.8" r="2.2"/><circle cx="5" cy="20.2" r="2.2"/></svg>
</div>
<div class="panel" id="rbody" style="left:1345px;top:171px;width:542px;height:617px;background:#f0eadc;border-radius:5px;overflow:hidden;box-shadow:0 0 3px rgba(0,0,0,.18)">
<svg class="abs" style="left:0;top:0" width="541" height="617" viewBox="0 0 541 617" fill="#e9e1cf"><g fill="none" stroke="#e9e1cf" stroke-width="3.5"><circle cx="52" cy="48" r="33"/><ellipse cx="52" cy="48" rx="15" ry="33"/><path d="M19 48 H85 M24 31 H80"/></g><g transform="translate(190 50) rotate(-20) scale(0.95)"><path d="M0 40 C2 20 6 0 16 -30" fill="none" stroke="#e9e1cf" stroke-width="3"/><ellipse cx="-8" cy="22" rx="5" ry="11" transform="rotate(-40 -8 22)"/><ellipse cx="14" cy="14" rx="5" ry="11" transform="rotate(45 14 14)"/><ellipse cx="-4" cy="0" rx="5" ry="11" transform="rotate(-35 -4 0)"/><ellipse cx="20" cy="-8" rx="5" ry="11" transform="rotate(50 20 -8)"/><ellipse cx="6" cy="-24" rx="5" ry="11" transform="rotate(-25 6 -24)"/><ellipse cx="20" cy="-38" rx="5" ry="10" transform="rotate(20 20 -38)"/></g><ellipse cx="229" cy="12.1" rx="5.1" ry="7.7" transform="rotate(0.0 229 22)"/><ellipse cx="229" cy="12.1" rx="5.1" ry="7.7" transform="rotate(36.0 229 22)"/><ellipse cx="229" cy="12.1" rx="5.1" ry="7.7" transform="rotate(72.0 229 22)"/><ellipse cx="229" cy="12.1" rx="5.1" ry="7.7" transform="rotate(108.0 229 22)"/><ellipse cx="229" cy="12.1" rx="5.1" ry="7.7" transform="rotate(144.0 229 22)"/><ellipse cx="229" cy="12.1" rx="5.1" ry="7.7" transform="rotate(180.0 229 22)"/><ellipse cx="229" cy="12.1" rx="5.1" ry="7.7" transform="rotate(216.0 229 22)"/><ellipse cx="229" cy="12.1" rx="5.1" ry="7.7" transform="rotate(252.0 229 22)"/><ellipse cx="229" cy="12.1" rx="5.1" ry="7.7" transform="rotate(288.0 229 22)"/><ellipse cx="229" cy="12.1" rx="5.1" ry="7.7" transform="rotate(324.0 229 22)"/><circle cx="229" cy="22" r="7"/><ellipse cx="132" cy="61.4" rx="2.3" ry="10.8" transform="rotate(0.0 132 74)"/><ellipse cx="132" cy="61.4" rx="2.3" ry="10.8" transform="rotate(25.7 132 74)"/><ellipse cx="132" cy="61.4" rx="2.3" ry="10.8" transform="rotate(51.4 132 74)"/><ellipse cx="132" cy="61.4" rx="2.3" ry="10.8" transform="rotate(77.1 132 74)"/><ellipse cx="132" cy="61.4" rx="2.3" ry="10.8" transform="rotate(102.9 132 74)"/><ellipse cx="132" cy="61.4" rx="2.3" ry="10.8" transform="rotate(128.6 132 74)"/><ellipse cx="132" cy="61.4" rx="2.3" ry="10.8" transform="rotate(154.3 132 74)"/><ellipse cx="132" cy="61.4" rx="2.3" ry="10.8" transform="rotate(180.0 132 74)"/><ellipse cx="132" cy="61.4" rx="2.3" ry="10.8" transform="rotate(205.7 132 74)"/><ellipse cx="132" cy="61.4" rx="2.3" ry="10.8" transform="rotate(231.4 132 74)"/><ellipse cx="132" cy="61.4" rx="2.3" ry="10.8" transform="rotate(257.1 132 74)"/><ellipse cx="132" cy="61.4" rx="2.3" ry="10.8" transform="rotate(282.9 132 74)"/><ellipse cx="132" cy="61.4" rx="2.3" ry="10.8" transform="rotate(308.6 132 74)"/><ellipse cx="132" cy="61.4" rx="2.3" ry="10.8" transform="rotate(334.3 132 74)"/><circle cx="132" cy="74" r="5"/><g fill="none" stroke="#e9e1cf" stroke-width="4"><circle cx="343" cy="54" r="30"/><path d="M343 30 V56 L331 66" stroke-linecap="round"/></g><path transform="translate(449 32) scale(1.0 1.0)" d="M0 26 C-6 14 -24 4 -24 -10 C-24 -20 -16 -26 -9 -26 C-4 -26 -1 -23 0 -19 C1 -23 4 -26 9 -26 C16 -26 24 -20 24 -10 C24 4 6 14 0 26 Z"/><g fill="none" stroke="#e9e1cf" stroke-width="3.5"><circle cx="447" cy="106" r="32"/><ellipse cx="447" cy="106" rx="14" ry="32"/><path d="M415 106 H479 M420 90 H474 M447 74 V138"/></g><ellipse cx="274" cy="89.4" rx="16.0" ry="14.4" transform="rotate(45.0 274 108)"/><ellipse cx="274" cy="89.4" rx="16.0" ry="14.4" transform="rotate(135.0 274 108)"/><ellipse cx="274" cy="89.4" rx="16.0" ry="14.4" transform="rotate(225.0 274 108)"/><ellipse cx="274" cy="89.4" rx="16.0" ry="14.4" transform="rotate(315.0 274 108)"/><path transform="translate(274 90) scale(0.625 0.5384615384615384)" d="M0 26 C-6 14 -24 4 -24 -10 C-24 -20 -16 -26 -9 -26 C-4 -26 -1 -23 0 -19 C1 -23 4 -26 9 -26 C16 -26 24 -20 24 -10 C24 4 6 14 0 26 Z"/><g fill="none" stroke="#e9e1cf" stroke-width="4"><path d="M154 194 V133 L204 124"/></g><ellipse cx="145" cy="195" rx="11" ry="8" transform="rotate(-20 145 195)"/><path transform="translate(80 140) scale(1.2916666666666667 1.1923076923076923)" d="M0 26 C-6 14 -24 4 -24 -10 C-24 -20 -16 -26 -9 -26 C-4 -26 -1 -23 0 -19 C1 -23 4 -26 9 -26 C16 -26 24 -20 24 -10 C24 4 6 14 0 26 Z"/><path d="M80 170 C82 182 74 186 66 180" fill="none" stroke="#e9e1cf" stroke-width="4" stroke-linecap="round"/><path d="M60 104 C70 96 90 100 110 108" fill="none" stroke="#e9e1cf" stroke-width="4" stroke-linecap="round"/><g fill="none" stroke="#e9e1cf" stroke-width="3"><circle cx="52" cy="215" r="13"/><circle cx="57" cy="270" r="14"/><path d="M52 215 L34 232 L50 268 L24 232 H40 M24 232 L28 262"/></g><g transform="translate(123 262) rotate(-18) scale(1.0)"><path d="M0 -2 C10 -2 20 10 19 20 C18 28 8 26 0 26 C-8 26 -18 28 -19 20 C-20 10 -10 -2 0 -2 Z"/><ellipse cx="-24" cy="-6" rx="7.5" ry="10.5" transform="rotate(-25 -24 -6)"/><ellipse cx="-9" cy="-22" rx="7.5" ry="11" transform="rotate(-8 -9 -22)"/><ellipse cx="9" cy="-22" rx="7.5" ry="11" transform="rotate(8 9 -22)"/><ellipse cx="24" cy="-6" rx="7.5" ry="10.5" transform="rotate(25 24 -6)"/></g><g transform="translate(189 312) rotate(-15) scale(1.0)"><path d="M0 -2 C10 -2 20 10 19 20 C18 28 8 26 0 26 C-8 26 -18 28 -19 20 C-20 10 -10 -2 0 -2 Z"/><ellipse cx="-24" cy="-6" rx="7.5" ry="10.5" transform="rotate(-25 -24 -6)"/><ellipse cx="-9" cy="-22" rx="7.5" ry="11" transform="rotate(-8 -9 -22)"/><ellipse cx="9" cy="-22" rx="7.5" ry="11" transform="rotate(8 9 -22)"/><ellipse cx="24" cy="-6" rx="7.5" ry="10.5" transform="rotate(25 24 -6)"/></g><polygon points="249.2,206.7 245.3,233.4 269.9,222.4 249.7,240.3 275.7,247.8 248.7,248.5 263.8,270.9 242.7,254.1 239.9,281.0 234.5,254.5 215.0,273.3 227.9,249.5 200.9,251.4 226.1,241.5 204.2,225.6 229.8,234.2 223.3,208.0 237.4,231.0"/><g stroke="#e9e1cf" stroke-width="16" stroke-linecap="round"><path d="M369 264 L375.0 234.6"/><path d="M369 264 L398.8 260.6"/><path d="M369 264 L381.5 291.3"/><path d="M369 264 L346.9 284.3"/><path d="M369 264 L342.9 249.2"/></g><circle cx="375.0" cy="234.6" r="11.5"/><circle cx="398.8" cy="260.6" r="11.5"/><circle cx="381.5" cy="291.3" r="11.5"/><circle cx="346.9" cy="284.3" r="11.5"/><circle cx="342.9" cy="249.2" r="11.5"/><circle cx="369" cy="264" r="15.2"/><ellipse cx="289" cy="289.7" rx="2.6" ry="12.2" transform="rotate(0.0 289 304)"/><ellipse cx="289" cy="289.7" rx="2.6" ry="12.2" transform="rotate(25.7 289 304)"/><ellipse cx="289" cy="289.7" rx="2.6" ry="12.2" transform="rotate(51.4 289 304)"/><ellipse cx="289" cy="289.7" rx="2.6" ry="12.2" transform="rotate(77.1 289 304)"/><ellipse cx="289" cy="289.7" rx="2.6" ry="12.2" transform="rotate(102.9 289 304)"/><ellipse cx="289" cy="289.7" rx="2.6" ry="12.2" transform="rotate(128.6 289 304)"/><ellipse cx="289" cy="289.7" rx="2.6" ry="12.2" transform="rotate(154.3 289 304)"/><ellipse cx="289" cy="289.7" rx="2.6" ry="12.2" transform="rotate(180.0 289 304)"/><ellipse cx="289" cy="289.7" rx="2.6" ry="12.2" transform="rotate(205.7 289 304)"/><ellipse cx="289" cy="289.7" rx="2.6" ry="12.2" transform="rotate(231.4 289 304)"/><ellipse cx="289" cy="289.7" rx="2.6" ry="12.2" transform="rotate(257.1 289 304)"/><ellipse cx="289" cy="289.7" rx="2.6" ry="12.2" transform="rotate(282.9 289 304)"/><ellipse cx="289" cy="289.7" rx="2.6" ry="12.2" transform="rotate(308.6 289 304)"/><ellipse cx="289" cy="289.7" rx="2.6" ry="12.2" transform="rotate(334.3 289 304)"/><circle cx="289" cy="304" r="5"/><path transform="translate(461 322) scale(1.25 1.1923076923076923)" d="M0 26 C-6 14 -24 4 -24 -10 C-24 -20 -16 -26 -9 -26 C-4 -26 -1 -23 0 -19 C1 -23 4 -26 9 -26 C16 -26 24 -20 24 -10 C24 4 6 14 0 26 Z"/><path d="M463 292 C460 280 470 270 488 280 M463 292 C450 276 436 282 432 276 M461 350 C462 364 452 366 446 358" fill="none" stroke="#e9e1cf" stroke-width="4" stroke-linecap="round"/><circle cx="466" cy="277" r="5" fill="none" stroke="#e9e1cf" stroke-width="3"/><circle cx="20" cy="330" r="18"/><circle cx="40" cy="318" r="20"/><circle cx="62" cy="326" r="20"/><circle cx="50" cy="346" r="18"/><circle cx="26" cy="346" r="16"/><circle cx="70" cy="340" r="14"/><circle cx="26" cy="374" r="9"/><circle cx="15" cy="388" r="4.5"/><g stroke="#e9e1cf" stroke-width="18" stroke-linecap="round"><path d="M125 413 L128.6 377.2"/><path d="M125 413 L160.2 405.3"/><path d="M125 413 L143.1 444.1"/><path d="M125 413 L101.0 439.9"/><path d="M125 413 L92.0 398.5"/></g><circle cx="128.6" cy="377.2" r="13.0"/><circle cx="160.2" cy="405.3" r="13.0"/><circle cx="143.1" cy="444.1" r="13.0"/><circle cx="101.0" cy="439.9" r="13.0"/><circle cx="92.0" cy="398.5" r="13.0"/><circle cx="125" cy="413" r="17.1"/><g transform="translate(262 400)"><path d="M-22 -6 C-24 14 -14 34 6 34 C24 34 30 18 32 2 L36 -28 C30 -34 26 -30 24 -22 L20 -2 L-6 -6 Z"/><g stroke="#e9e1cf" stroke-width="9" stroke-linecap="round"><path d="M-12 6 L-36 -26"/><path d="M-4 -2 L-22 -42"/><path d="M6 -6 L-4 -52"/><path d="M16 -6 L10 -52"/></g></g><ellipse cx="360" cy="348.5" rx="8.8" ry="19.8" transform="rotate(0.0 360 374)"/><ellipse cx="360" cy="348.5" rx="8.8" ry="19.8" transform="rotate(30.0 360 374)"/><ellipse cx="360" cy="348.5" rx="8.8" ry="19.8" transform="rotate(60.0 360 374)"/><ellipse cx="360" cy="348.5" rx="8.8" ry="19.8" transform="rotate(90.0 360 374)"/><ellipse cx="360" cy="348.5" rx="8.8" ry="19.8" transform="rotate(120.0 360 374)"/><ellipse cx="360" cy="348.5" rx="8.8" ry="19.8" transform="rotate(150.0 360 374)"/><ellipse cx="360" cy="348.5" rx="8.8" ry="19.8" transform="rotate(180.0 360 374)"/><ellipse cx="360" cy="348.5" rx="8.8" ry="19.8" transform="rotate(210.0 360 374)"/><ellipse cx="360" cy="348.5" rx="8.8" ry="19.8" transform="rotate(240.0 360 374)"/><ellipse cx="360" cy="348.5" rx="8.8" ry="19.8" transform="rotate(270.0 360 374)"/><ellipse cx="360" cy="348.5" rx="8.8" ry="19.8" transform="rotate(300.0 360 374)"/><ellipse cx="360" cy="348.5" rx="8.8" ry="19.8" transform="rotate(330.0 360 374)"/><circle cx="360" cy="374" r="20"/><circle cx="360" cy="374" r="11" fill="#f0eadc"/><circle cx="360" cy="374" r="6"/><g stroke="#e9e1cf" stroke-width="13" stroke-linecap="round"><path d="M425 455 L434.6 437.4"/><path d="M425 455 L444.7 458.7"/><path d="M425 455 L427.6 474.8"/><path d="M425 455 L406.9 463.6"/><path d="M425 455 L411.3 440.5"/></g><circle cx="434.6" cy="437.4" r="9.4"/><circle cx="444.7" cy="458.7" r="9.4"/><circle cx="427.6" cy="474.8" r="9.4"/><circle cx="406.9" cy="463.6" r="9.4"/><circle cx="411.3" cy="440.5" r="9.4"/><circle cx="425" cy="455" r="12.3"/><g transform="translate(492 455) rotate(-35) scale(0.95)"><path d="M0 40 C2 20 6 0 16 -30" fill="none" stroke="#e9e1cf" stroke-width="3"/><ellipse cx="-8" cy="22" rx="5" ry="11" transform="rotate(-40 -8 22)"/><ellipse cx="14" cy="14" rx="5" ry="11" transform="rotate(45 14 14)"/><ellipse cx="-4" cy="0" rx="5" ry="11" transform="rotate(-35 -4 0)"/><ellipse cx="20" cy="-8" rx="5" ry="11" transform="rotate(50 20 -8)"/><ellipse cx="6" cy="-24" rx="5" ry="11" transform="rotate(-25 6 -24)"/><ellipse cx="20" cy="-38" rx="5" ry="10" transform="rotate(20 20 -38)"/></g><g transform="translate(328 483) rotate(8)"><path d="M-6 -22 C4 -26 16 -20 12 -6 C10 4 6 10 10 22 C12 32 4 36 -2 32 C-10 26 -8 10 -10 0 C-12 -10 -14 -18 -6 -22 Z"/><circle cx="-11" cy="-28" r="3.5"/><circle cx="-4" cy="-31" r="3"/><circle cx="3" cy="-32" r="2.8"/><circle cx="9" cy="-32" r="2.6"/><circle cx="15" cy="-30" r="2.4"/></g><polygon points="53.2,476.9 45.8,502.8 62.1,524.2 36.2,516.8 14.8,533.1 22.2,507.2 5.9,485.8 31.8,493.2"/><polygon points="60.7,479.9 79.1,497.4 104.1,492.7 86.6,511.1 91.3,536.1 72.9,518.6 47.9,523.3 65.4,504.9"/><circle cx="38" cy="547" r="5"/><circle cx="50" cy="552" r="5"/><circle cx="60" cy="545" r="5"/><g fill="none" stroke="#e9e1cf" stroke-width="3"><ellipse cx="220" cy="474" rx="13" ry="30"/><ellipse cx="220" cy="534" rx="13" ry="30"/><ellipse cx="190" cy="504" rx="30" ry="13"/><ellipse cx="250" cy="504" rx="30" ry="13"/><path d="M220 444 V564 M160 504 H280"/><rect x="192" y="480" width="10" height="10" transform="rotate(-10 197 485)"/><rect x="238" y="476" width="10" height="10" transform="rotate(-10 243 481)"/><rect x="197" y="524" width="10" height="10" transform="rotate(-10 202 529)"/><rect x="243" y="518" width="10" height="10" transform="rotate(-10 248 523)"/></g><g transform="translate(362 560) rotate(-28)"><path d="M0 0 C40 -10 80 -10 110 4" fill="none" stroke="#e9e1cf" stroke-width="3"/><path d="M8 -2.0 L18 -15" stroke="#e9e1cf" stroke-width="4" stroke-linecap="round"/><path d="M8 -1 L20 12" stroke="#e9e1cf" stroke-width="4" stroke-linecap="round"/><path d="M16 -2.3 L26 -17" stroke="#e9e1cf" stroke-width="4" stroke-linecap="round"/><path d="M16 -1 L28 14" stroke="#e9e1cf" stroke-width="4" stroke-linecap="round"/><path d="M25 -2.6 L35 -19" stroke="#e9e1cf" stroke-width="4" stroke-linecap="round"/><path d="M25 -1 L37 16" stroke="#e9e1cf" stroke-width="4" stroke-linecap="round"/><path d="M34 -2.9 L44 -22" stroke="#e9e1cf" stroke-width="4" stroke-linecap="round"/><path d="M34 -1 L46 17" stroke="#e9e1cf" stroke-width="4" stroke-linecap="round"/><path d="M42 -3.2 L52 -24" stroke="#e9e1cf" stroke-width="4" stroke-linecap="round"/><path d="M42 -1 L54 19" stroke="#e9e1cf" stroke-width="4" stroke-linecap="round"/><path d="M50 -3.5 L60 -26" stroke="#e9e1cf" stroke-width="4" stroke-linecap="round"/><path d="M50 -1 L62 21" stroke="#e9e1cf" stroke-width="4" stroke-linecap="round"/><path d="M59 -3.8 L69 -24" stroke="#e9e1cf" stroke-width="4" stroke-linecap="round"/><path d="M59 -1 L71 19" stroke="#e9e1cf" stroke-width="4" stroke-linecap="round"/><path d="M68 -4.1 L78 -22" stroke="#e9e1cf" stroke-width="4" stroke-linecap="round"/><path d="M68 -1 L80 17" stroke="#e9e1cf" stroke-width="4" stroke-linecap="round"/><path d="M76 -4.4 L86 -19" stroke="#e9e1cf" stroke-width="4" stroke-linecap="round"/><path d="M76 -1 L88 16" stroke="#e9e1cf" stroke-width="4" stroke-linecap="round"/><path d="M84 -4.7 L94 -17" stroke="#e9e1cf" stroke-width="4" stroke-linecap="round"/><path d="M84 -1 L96 14" stroke="#e9e1cf" stroke-width="4" stroke-linecap="round"/><path d="M93 -5.0 L103 -15" stroke="#e9e1cf" stroke-width="4" stroke-linecap="round"/><path d="M93 -1 L105 12" stroke="#e9e1cf" stroke-width="4" stroke-linecap="round"/><path d="M102 -5.3 L112 -13" stroke="#e9e1cf" stroke-width="4" stroke-linecap="round"/><path d="M102 -1 L114 10" stroke="#e9e1cf" stroke-width="4" stroke-linecap="round"/></g><g transform="translate(165 590)"><path d="M-3 0 C-14 -26 -42 -34 -46 -24 C-50 -10 -34 6 -6 6 Z"/><path d="M3 0 C14 -26 42 -34 46 -24 C50 -10 34 6 6 6 Z"/><path d="M-4 6 C-24 6 -36 22 -28 30 C-18 38 -6 24 -2 10 Z"/><path d="M4 6 C24 6 36 22 28 30 C18 38 6 24 2 10 Z"/></g><path d="M268 620 C270 596 276 584 282 578 C282 596 284 606 290 620 Z"/><path d="M292 620 C296 598 306 588 316 582 C312 598 312 608 318 620 Z"/><path d="M318 620 C322 600 332 584 340 572 C340 592 342 606 348 620 Z"/><ellipse cx="496" cy="572.6" rx="11.8" ry="18.9" transform="rotate(0.0 496 597)"/><ellipse cx="496" cy="572.6" rx="11.8" ry="18.9" transform="rotate(45.0 496 597)"/><ellipse cx="496" cy="572.6" rx="11.8" ry="18.9" transform="rotate(90.0 496 597)"/><ellipse cx="496" cy="572.6" rx="11.8" ry="18.9" transform="rotate(135.0 496 597)"/><ellipse cx="496" cy="572.6" rx="11.8" ry="18.9" transform="rotate(180.0 496 597)"/><ellipse cx="496" cy="572.6" rx="11.8" ry="18.9" transform="rotate(225.0 496 597)"/><ellipse cx="496" cy="572.6" rx="11.8" ry="18.9" transform="rotate(270.0 496 597)"/><ellipse cx="496" cy="572.6" rx="11.8" ry="18.9" transform="rotate(315.0 496 597)"/><circle cx="496" cy="597" r="9" fill="#f0eadc"/><circle cx="496" cy="597" r="5"/><ellipse cx="545" cy="32.6" rx="12.0" ry="13.5" transform="rotate(0.0 545 50)"/><ellipse cx="545" cy="32.6" rx="12.0" ry="13.5" transform="rotate(72.0 545 50)"/><ellipse cx="545" cy="32.6" rx="12.0" ry="13.5" transform="rotate(144.0 545 50)"/><ellipse cx="545" cy="32.6" rx="12.0" ry="13.5" transform="rotate(216.0 545 50)"/><ellipse cx="545" cy="32.6" rx="12.0" ry="13.5" transform="rotate(288.0 545 50)"/><g stroke="#e9e1cf" stroke-width="14" stroke-linecap="round"><path d="M548 250 L555.1 227.1"/><path d="M548 250 L572.0 249.7"/><path d="M548 250 L555.7 272.7"/><path d="M548 250 L528.8 264.4"/><path d="M548 250 L528.4 236.2"/></g><circle cx="555.1" cy="227.1" r="10.1"/><circle cx="572.0" cy="249.7" r="10.1"/><circle cx="555.7" cy="272.7" r="10.1"/><circle cx="528.8" cy="264.4" r="10.1"/><circle cx="528.4" cy="236.2" r="10.1"/><circle cx="548" cy="250" r="13.3"/><ellipse cx="548" cy="420.3" rx="6.8" ry="15.3" transform="rotate(0.0 548 440)"/><ellipse cx="548" cy="420.3" rx="6.8" ry="15.3" transform="rotate(36.0 548 440)"/><ellipse cx="548" cy="420.3" rx="6.8" ry="15.3" transform="rotate(72.0 548 440)"/><ellipse cx="548" cy="420.3" rx="6.8" ry="15.3" transform="rotate(108.0 548 440)"/><ellipse cx="548" cy="420.3" rx="6.8" ry="15.3" transform="rotate(144.0 548 440)"/><ellipse cx="548" cy="420.3" rx="6.8" ry="15.3" transform="rotate(180.0 548 440)"/><ellipse cx="548" cy="420.3" rx="6.8" ry="15.3" transform="rotate(216.0 548 440)"/><ellipse cx="548" cy="420.3" rx="6.8" ry="15.3" transform="rotate(252.0 548 440)"/><ellipse cx="548" cy="420.3" rx="6.8" ry="15.3" transform="rotate(288.0 548 440)"/><ellipse cx="548" cy="420.3" rx="6.8" ry="15.3" transform="rotate(324.0 548 440)"/><g transform="translate(540 150) rotate(10) scale(0.8)"><path d="M0 40 C2 20 6 0 16 -30" fill="none" stroke="#e9e1cf" stroke-width="3"/><ellipse cx="-8" cy="22" rx="5" ry="11" transform="rotate(-40 -8 22)"/><ellipse cx="14" cy="14" rx="5" ry="11" transform="rotate(45 14 14)"/><ellipse cx="-4" cy="0" rx="5" ry="11" transform="rotate(-35 -4 0)"/><ellipse cx="20" cy="-8" rx="5" ry="11" transform="rotate(50 20 -8)"/><ellipse cx="6" cy="-24" rx="5" ry="11" transform="rotate(-25 6 -24)"/><ellipse cx="20" cy="-38" rx="5" ry="10" transform="rotate(20 20 -38)"/></g><circle cx="46" cy="545" r="0"/></svg>
<div class="abs" style="left:22px;top:23px;width:74px;height:74px;border-radius:9px;background:#edf6e6"></div>
<div class="abs" style="left:33px;top:36px;font-size:17px;line-height:24px;color:#111">Hi</div>
<div class="abs" style="--w:51.2;letter-spacing:0.77px;left:33px;top:68px;font-size:12.5px;line-height:16px;color:#111;white-space:nowrap">2:05 PM</div>
<div class="abs" style="left:202px;top:119px;width:318px;height:105px;border-radius:9px;background:#0c3263"></div>
<div class="abs" style="--w:273.6;letter-spacing:0.36px;left:213px;top:133px;font-size:17px;line-height:24px;color:#fff;white-space:nowrap">Hi Monish Gowda, Welcome this is</div>
<div class="abs" style="--w:263.7;letter-spacing:0.22px;left:213px;top:163px;font-size:17px;line-height:24px;color:#fff;white-space:nowrap">Bella Rogers how may i help you?</div>
<div class="abs" style="--w:52.3;letter-spacing:0.96px;left:456px;top:195px;font-size:12.5px;line-height:16px;color:#fff;white-space:nowrap">2:06 PM</div>
</div>
<div class="panel" id="rfoot" style="left:1345px;top:794px;width:542px;height:85px;border-radius:5px;box-shadow:0 1px 5px rgba(0,0,0,.25)">
<div class="abs" style="left:11px;top:11px;width:423px;height:64px;background:#f0f0f0;border-radius:3px 3px 0 0"></div>
<svg class="abs" style="left:33px;top:32px" width="21" height="21" viewBox="0 0 21 21" fill="none" stroke="#555" stroke-width="1.4"><circle cx="10.5" cy="10.5" r="8.6"/><circle cx="7.6" cy="8.4" r="1" fill="#555" stroke="none"/><circle cx="13.4" cy="8.4" r="1" fill="#555" stroke="none"/><path d="M6.4 12.4 C7.4 14.4 8.8 15.2 10.5 15.2 C12.2 15.2 13.6 14.4 14.6 12.4"/></svg>
<div class="abs" style="--w:119.3;letter-spacing:0.15px;left:80px;top:30px;font-size:16px;line-height:24px;color:#9a9a9a;white-space:nowrap">Type a message</div>
<svg class="abs" style="left:356px;top:32px" width="23" height="22" viewBox="0 0 23 22" fill="none" stroke="#555" stroke-width="1.7" stroke-linejoin="round"><path d="M2.4 3.2 H20.6 V16.2 H14.4 L11.5 19.4 L8.6 16.2 H2.4 Z"/></svg>
<svg class="abs" style="left:401px;top:32px" width="21" height="21" viewBox="0 0 24 24" fill="none" stroke="#777" stroke-width="1.8" stroke-linecap="round" stroke-linejoin="round"><path d="M10 13a5 5 0 0 0 7.54.54l3-3a5 5 0 0 0-7.07-7.07l-1.72 1.71"/><path d="M14 11a5 5 0 0 0-7.54-.54l-3 3a5 5 0 0 0 7.07 7.07l1.71-1.71"/></svg>
<svg class="abs" style="left:452px;top:30px" width="22" height="26" viewBox="0 0 22 26"><rect x="7" y="1.6" width="8" height="14" rx="4" fill="#444"/><path d="M3.8 8.6 C3.8 15 7 18.2 11 18.2 C15 18.2 18.2 15 18.2 8.6 M11 18.4 V23 M6.6 23.2 H15.4" fill="none" stroke="#444" stroke-width="1.5"/></svg>
<div class="abs" style="left:493px;top:24px;width:38px;height:38px;border-radius:7px;background:#1473e6"></div>
<svg class="abs" style="left:493px;top:24px" width="38" height="38" viewBox="0 0 38 38"><path d="M27.1 11 L9.7 17.3 L17 21.6 L21.3 28.7 Z" fill="#fff" stroke="#fff" stroke-width="1.6" stroke-linejoin="round"/><path d="M17.3 21.3 L22.6 16" stroke="#1473e6" stroke-width="1.3" stroke-linecap="round"/></svg>
</div>
</body></html>
